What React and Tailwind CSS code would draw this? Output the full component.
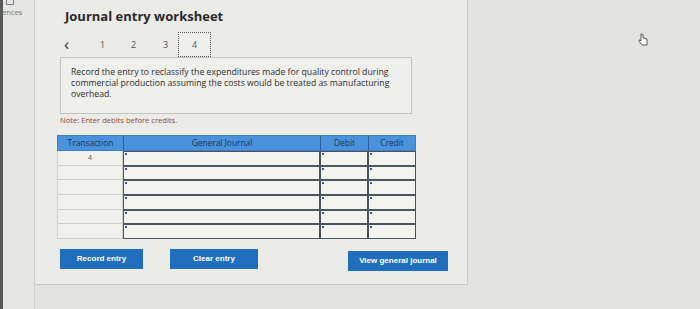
import React from "react";

const rows = ["4", "", "", "", "", ""];

function Cell({ w, dark = true }) {
  return (
    <div
      className={`${w} h-full border ${dark ? "border-[#4a5560]" : "border-[#cfd0cc]"} bg-[#f3f3f0] relative`}
    >
      {dark && <div className="absolute left-[1px] top-[1px] w-[2px] h-[2px] bg-[#3a5a8a]" />}
    </div>
  );
}

export default function App() {
  return (
    <div className="w-[700px] h-[309px] bg-[#e3e3df] flex overflow-hidden" style={{ fontFamily: '"Open Sans", "DejaVu Sans", sans-serif' }}>
      {/* left strip */}
      <div className="w-[35px] h-full flex shrink-0">
        <div className="w-[3px] h-full bg-[#5a5a58]" />
        <div className="flex-1 flex flex-col border-r border-[#d0d0cc] bg-[#e6e6e2]">
          <div className="w-[8px] h-[5px] border border-[#7a7f8a] border-t-0 ml-[3px]" />
          <div className="text-[7.5px] leading-[8px] text-[#777] mt-[3px] -ml-[1px]">ences</div>
        </div>
      </div>

      {/* panel */}
      <div className="w-[433px] h-[285px] shrink-0 bg-[#ebebe7] border-b border-r border-[#c9c9c5] flex flex-col">
        <div className="pl-[30px] pt-[8px] text-[13px] leading-[17px] font-bold text-[#2a2a2a]" style={{ fontFamily: '"Open Sans", sans-serif' }}>
          Journal entry worksheet
        </div>
        {/* nav */}
        <div className="flex items-center h-[25px] mt-[7px] pl-[29px] text-[9px] text-[#555]">
          <span className="text-[17px] leading-none text-[#333] w-[36px] -mt-[3px]">&lsaquo;</span>
          <span className="w-[31px]">1</span>
          <span className="w-[32px]">2</span>
          <span className="w-[15px]">3</span>
          <div className="w-[33px] h-[25px] border border-dotted border-[#555] bg-[#efefec] flex items-center justify-center">4</div>
        </div>
        {/* instruction */}
        <div className="ml-[25px] w-[352px] h-[57px] border border-[#c4c4c0] bg-[#efefec] pl-[10px] pt-[9px] text-[8.7px] leading-[11px] text-[#2e2e2e] font-medium whitespace-nowrap">
          Record the entry to reclassify the expenditures made for quality control during<br />
          commercial production assuming the costs would be treated as manufacturing<br />
          overhead.
        </div>
        <div className="ml-[25px] mt-[1px] text-[7.6px] leading-[10px] text-[#8a4a3a] font-medium">Note: Enter debits before credits.</div>
        {/* table */}
        <div className="ml-[22px] mt-[10px] w-[359px] flex flex-col">
          <div className="flex h-[16px] bg-[#4a92dc] text-[#17355c] text-[8.4px] font-medium border border-[#3d7fc4]">
            <div className="w-[66px] flex items-center justify-center border-r border-[#2f5f99]">Transaction</div>
            <div className="w-[197px] flex items-center justify-center border-r border-[#2f5f99]">General Journal</div>
            <div className="w-[48px] flex items-center justify-center border-r border-[#2f5f99]">Debit</div>
            <div className="flex-1 flex items-center justify-center">Credit</div>
          </div>
          {rows.map((r, i) => (
            <div key={i} className="flex h-[14.7px]">
              <div className="w-[66px] h-full border border-t-0 border-[#cfd0cc] bg-[#f1f1ee] flex items-center justify-center text-[7px] text-[#555]">{r}</div>
              <Cell w="w-[197px]" />
              <Cell w="w-[48px]" />
              <Cell w="flex-1" />
            </div>
          ))}
        </div>
        {/* buttons */}
        <div className="flex mt-[10px] pl-[25px] items-start" style={{ fontFamily: '"Liberation Sans", Arial, sans-serif' }}>
          <button className="w-[83px] h-[20px] bg-[#1f6fbd] text-white text-[8px] font-bold">Record entry</button>
          <button className="w-[88px] h-[20px] ml-[27px] bg-[#1f6fbd] text-white text-[8px] font-bold">Clear entry</button>
          <button className="w-[100px] h-[20px] ml-[90px] mt-[2px] bg-[#1f6fbd] text-white text-[8px] font-bold">View general journal</button>
        </div>
      </div>

      {/* right area with cursor */}
      <div className="flex-1 relative">
        <svg className="absolute left-[170px] top-[33px]" width="10" height="13" viewBox="0 0 10 13">
          <path d="M3 1 L3 8 L1.5 6.8 L1 8 L4 12 L9 12 L9 6 L7 5.5 L7 5 L5 4.8 L5 1.5 Z" fill="#fff" stroke="#333" strokeWidth="0.8" />
        </svg>
      </div>
    </div>
  );
}
